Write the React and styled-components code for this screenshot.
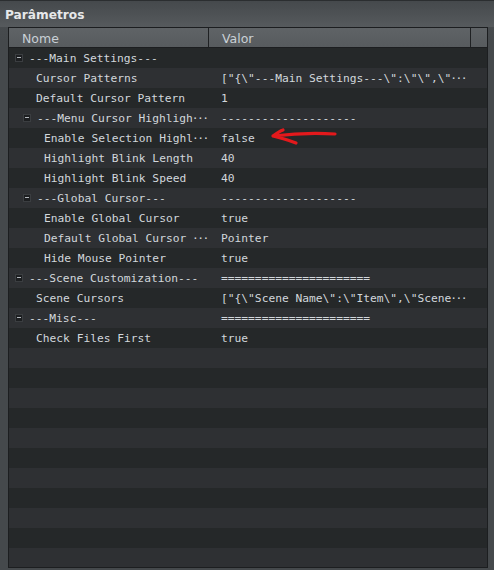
import React from 'react'
import styled, { createGlobalStyle } from 'styled-components'

const GlobalStyle = createGlobalStyle`
  html, body {
    margin: 0;
    padding: 0;
    background: #464a4d;
  }
  * { box-sizing: border-box; }
`

const Panel = styled.div`
  position: relative;
  width: 494px;
  height: 570px;
  display: flex;
  flex-direction: column;
  background: linear-gradient(#4a4e51, #45494c 40px, #45494c);
  border-top: 1px solid #2b2e30;
  font-family: 'DejaVu Sans', 'Liberation Sans', sans-serif;
`

const Title = styled.div`
  height: 26px;
  padding: 1px 5px 0;
  display: flex;
  align-items: center;
  font-size: 12.2px;
  font-weight: bold;
  color: #e6e8ea;
  background: linear-gradient(#45494c, #565a5d);
`

const Table = styled.div`
  flex: 1;
  margin: 0 6px 2px 8px;
  display: flex;
  flex-direction: column;
  border: 1px solid #1c1e20;
  background: #252829;
  overflow: hidden;
`

const Header = styled.div`
  height: 20px;
  flex: none;
  display: grid;
  grid-template-columns: 200px 262px 1fr;
  background: linear-gradient(#5f6366, #575b5e);
  border-bottom: 1px solid #1c1e20;
`

const HeaderCell = styled.div`
  display: flex;
  align-items: center;
  padding: 1px 0 0 13px;
  font-size: 12.5px;
  color: #c9d0d6;
  border-right: ${p => (p.$last ? 'none' : '1px solid #1f2123')};
`

const Row = styled.div`
  height: 20px;
  flex: none;
  display: grid;
  grid-template-columns: 199px 1fr;
  padding-top: 1px;
  background: ${p => (p.$odd ? '#2e3033' : '#252829')};
  font-family: 'DejaVu Sans Mono', 'Liberation Mono', monospace;
  font-size: 11.25px;
  color: #d2d7dc;
  white-space: pre;
`

const NameCell = styled.div`
  display: flex;
  align-items: center;
  padding-left: ${p => p.$pad}px;
  overflow: hidden;
`

const ValueCell = styled.div`
  display: flex;
  align-items: center;
  padding-left: 13px;
  overflow: hidden;
`

const Dots = styled.span`
  letter-spacing: -1.5px;
  margin-left: -1px;
`

const Toggle = styled.span`
  position: relative;
  width: 8px;
  height: 8px;
  margin: -1px 6px 0 0;
  flex: none;
  background: #1d1f21;
  border: 1px solid #3b3e41;
  &::after {
    content: '';
    position: absolute;
    left: 1px;
    right: 1px;
    top: 2px;
    height: 1px;
    background: #b4b9be;
  }
`

const Arrow = styled.svg`
  position: absolute;
  left: 268px;
  top: 126px;
`

const rows = [
  { name: '---Main Settings---', value: '', group: true, level: 0 },
  { name: 'Cursor Patterns', value: '["{\\"---Main Settings---\\":\\"\\",\\"', cut: 'v', level: 1 },
  { name: 'Default Cursor Pattern', value: '1', level: 1 },
  { name: '---Menu Cursor Highligh', cut: 'n', value: '-'.repeat(20), group: true, level: 1 },
  { name: 'Enable Selection Highl', cut: 'n', value: 'false', level: 2 },
  { name: 'Highlight Blink Length', value: '40', level: 2 },
  { name: 'Highlight Blink Speed', value: '40', level: 2 },
  { name: '---Global Cursor---', value: '-'.repeat(20), group: true, level: 1 },
  { name: 'Enable Global Cursor', value: 'true', level: 2 },
  { name: 'Default Global Cursor ', cut: 'n', value: 'Pointer', level: 2 },
  { name: 'Hide Mouse Pointer', value: 'true', level: 2 },
  { name: '---Scene Customization---', value: '='.repeat(22), group: true, level: 0 },
  { name: 'Scene Cursors', value: '["{\\"Scene Name\\":\\"Item\\",\\"Scene', cut: 'v', level: 1 },
  { name: '---Misc---', value: '='.repeat(22), group: true, level: 0 },
  { name: 'Check Files First', value: 'true', level: 1 },
]

const TOTAL_ROWS = 26

export default function App() {
  const list = Array.from({ length: TOTAL_ROWS }, (_, i) => rows[i] || null)
  return (
    <>
      <GlobalStyle />
      <Panel>
        <Title>Parâmetros</Title>
        <Table>
          <Header>
            <HeaderCell>Nome</HeaderCell>
            <HeaderCell>Valor</HeaderCell>
            <HeaderCell $last />
          </Header>
          {list.map((r, i) => (
            <Row key={i} $odd={i % 2 === 1}>
              {r ? (
                <>
                  <NameCell $pad={r.group ? 6 + 8 * r.level : 19 + 8 * r.level}>
                    {r.group && <Toggle />}
                    {r.name}
                    {r.cut === 'n' && <Dots>···</Dots>}
                  </NameCell>
                  <ValueCell>
                    {r.value}
                    {r.cut === 'v' && <Dots>···</Dots>}
                  </ValueCell>
                </>
              ) : null}
            </Row>
          ))}
        </Table>
        <Arrow width="72" height="22" viewBox="0 0 72 22">
          <path
            d="M67 7 C52 6 30 6 5 9 M5 9 C9 6 12 4 15 3 M5 9 C12 11 20 13 28 16"
            fill="none"
            stroke="#e3191c"
            strokeWidth="3.2"
            strokeLinecap="round"
          />
        </Arrow>
      </Panel>
    </>
  )
}
